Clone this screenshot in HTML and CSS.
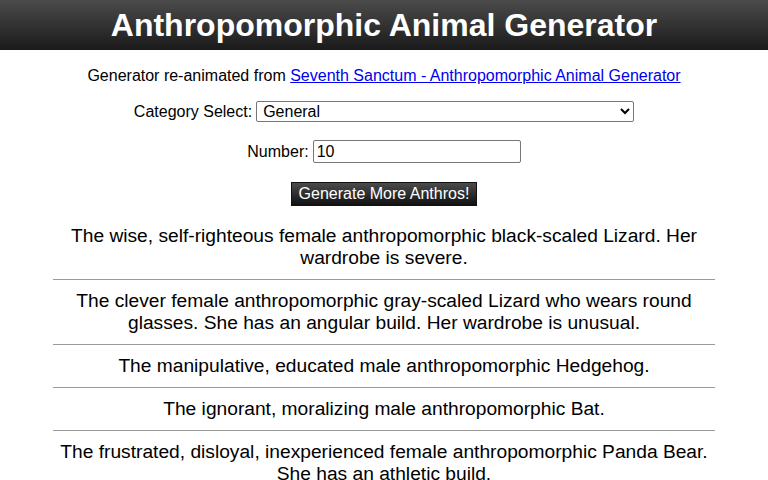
FILE: index.html
```html
<!DOCTYPE html>
<html>
<head>
  <meta charset="UTF-8">
  <title>Anthropomorphic Animal Generator</title>
  <link rel="stylesheet" href="styles.css">
</head>
<body>
  <div class="header">
    <h1>Anthropomorphic Animal Generator</h1>
  </div>

  <div class="intro">
    Generator re-animated from <a href="#">Seventh Sanctum - Anthropomorphic Animal Generator</a>
  </div>

  <div class="form-row select-row">
    <label for="category">Category Select:</label>
    <select id="category" class="category">
      <option>General</option>
      <option>Fantasy</option>
      <option>Sci-Fi</option>
    </select>
  </div>

  <div class="form-row number-row">
    <label for="number">Number:</label>
    <input type="text" id="number" class="number" value="10">
  </div>

  <div class="form-row button-row">
    <button class="generate">Generate More Anthros!</button>
  </div>

  <div class="results">
    <div class="result">The wise, self-righteous female anthropomorphic black-scaled Lizard. Her wardrobe is severe.</div>
    <div class="result">The clever female anthropomorphic gray-scaled Lizard who wears round glasses. She has an angular build. Her wardrobe is unusual.</div>
    <div class="result">The manipulative, educated male anthropomorphic Hedgehog.</div>
    <div class="result">The ignorant, moralizing male anthropomorphic Bat.</div>
    <div class="result">The frustrated, disloyal, inexperienced female anthropomorphic Panda Bear. She has an athletic build.</div>
    <div class="result">The cheerful, honest male anthropomorphic Raccoon.</div>
  </div>
</body>
</html>
```

FILE: styles.css
```css
body {
  margin: 0;
  font-family: "Liberation Sans", Arial, sans-serif;
  font-size: 16px;
  color: #000;
  background: #fff;
}
.header {
  height: 50px;
  background: linear-gradient(to bottom, #4b4b4b, #1a1a1a);
  display: flex;
  align-items: center;
  justify-content: center;
}
.header h1 {
  margin: 0;
  color: #fff;
  font-size: 32px;
  font-weight: bold;
}
.intro {
  text-align: center;
  margin-top: 17px;
}
.intro a {
  color: #0000ee;
}
.form-row {
  display: flex;
  justify-content: center;
  align-items: center;
  gap: 4px;
}
.select-row {
  margin-top: 16px;
}
.number-row {
  margin-top: 18px;
}
.button-row {
  margin-top: 19px;
}
.category {
  width: 378px;
  height: 21px;
  font-family: inherit;
  font-size: 16px;
  border: 1px solid #767676;
  border-radius: 2px;
  background: #fff;
  padding: 0 2px;
}
.number {
  width: 208px;
  height: 23px;
  box-sizing: border-box;
  font-family: inherit;
  font-size: 16px;
  border: 1px solid #767676;
  border-radius: 2px;
  padding: 1px 3px;
}
.generate {
  width: 186px;
  height: 24px;
  font-family: inherit;
  font-size: 16px;
  color: #fff;
  border: 1px solid #111;
  background: linear-gradient(to bottom, #4b4b4b, #111);
  padding: 0 6px;
}
.results {
  width: 662px;
  margin: 9px auto 0;
}
.result {
  text-align: center;
  font-size: 19.2px;
  padding: 10px 0;
  border-bottom: 1px solid #9a9a9a;
}
```
